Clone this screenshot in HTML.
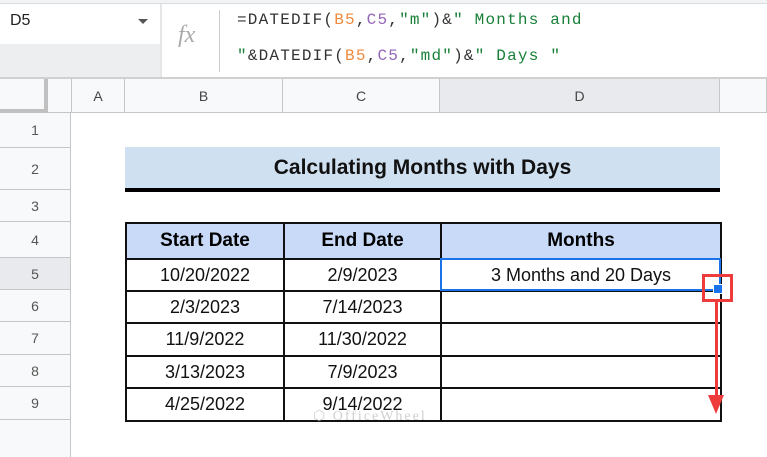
<!DOCTYPE html><html><head><style>
body{margin:0;width:767px;height:457px;overflow:hidden;background:#fff;font-family:"Liberation Sans",Arial,sans-serif;position:relative}
.a{position:absolute;box-sizing:border-box}
.mono{font-family:"Liberation Mono","DejaVu Sans Mono",monospace;font-size:16px;letter-spacing:1.2px;color:#333}
.ch{top:79px;height:34px;background:#f8f9fa;border-right:1px solid #c6c6c6;border-bottom:1px solid #c6c6c6;color:#444;font-size:14px;text-align:center;line-height:34px}
.rh{left:0;width:71px;background:#f8f9fa;border-right:1px solid #c6c6c6;border-bottom:1px solid #c6c6c6;color:#555;font-size:14px;text-align:center}
table{position:absolute;left:125px;top:222px;border-collapse:collapse;font-size:18px;table-layout:fixed}
td{border:2px solid #111;text-align:center;padding:0;color:#111}
th{border:2px solid #111;background:#c9daf8;font-size:19px;padding:0}
</style></head><body>
<div class="a" style="left:0;top:0;width:767px;height:4px;background:#f1f3f4;border-bottom:1px solid #dadce0"></div>
<div class="a" style="left:0;top:4px;width:160px;height:40px;font-size:16px;line-height:34px;padding-left:10px;color:#222">D5</div>
<div class="a" style="left:138px;top:19px;width:0;height:0;border-left:5px solid transparent;border-right:5px solid transparent;border-top:5px solid #555"></div>
<div class="a" style="left:0;top:44px;width:160px;height:34px;background:#eceef0"></div>
<div class="a" style="left:160px;top:4px;width:2px;height:74px;background:#e6e6e6"></div>
<div class="a" style="left:178px;top:22px;font-family:'Liberation Serif',serif;font-style:italic;font-size:24px;color:#aaa">fx</div>
<div class="a" style="left:219px;top:10px;width:1px;height:62px;background:#ccc"></div>
<div class="a mono" style="left:237px;top:11px">=DATEDIF(<span style="color:#f08a3e">B5</span>,<span style="color:#9565b8">C5</span>,<span style="color:#188038">"m"</span>)&amp;<span style="color:#188038">" Months and</span></div>
<div class="a mono" style="left:237px;top:47px"><span style="color:#188038">"</span>&amp;DATEDIF(<span style="color:#f08a3e">B5</span>,<span style="color:#9565b8">C5</span>,<span style="color:#188038">"md"</span>)&amp;<span style="color:#188038">" Days "</span></div>
<div class="a" style="left:0;top:77px;width:767px;height:2px;background:#d0d0d0"></div>
<div class="a ch" style="left:0;width:48px;border-right:4px solid #c0c0c0;border-bottom:4px solid #c0c0c0"></div>
<div class="a ch" style="left:48px;width:23px;border-right:none"></div>
<div class="a ch" style="left:71px;width:54px;border-left:1px solid #c6c6c6">A</div>
<div class="a ch" style="left:125px;width:158px">B</div>
<div class="a ch" style="left:283px;width:157px">C</div>
<div class="a ch" style="left:440px;width:280px;background:#e8eaed">D</div>
<div class="a ch" style="left:720px;width:47px"></div>
<div class="a rh" style="top:113px;height:35px;line-height:35px">1</div>
<div class="a rh" style="top:148px;height:42px;line-height:42px">2</div>
<div class="a rh" style="top:190px;height:32px;line-height:32px">3</div>
<div class="a rh" style="top:222px;height:36px;line-height:36px">4</div>
<div class="a rh" style="top:258px;height:32px;line-height:32px;background:#e8eaed">5</div>
<div class="a rh" style="top:290px;height:32px;line-height:32px">6</div>
<div class="a rh" style="top:322px;height:33px;line-height:33px">7</div>
<div class="a rh" style="top:355px;height:32px;line-height:32px">8</div>
<div class="a rh" style="top:387px;height:33px;line-height:33px">9</div>
<div class="a rh" style="top:420px;height:37px;border-bottom:none"></div>
<div class="a" style="left:125px;top:147px;width:595px;height:45px;background:#cfe0f1;border-bottom:4px solid #000;text-align:center;font-weight:bold;font-size:21px;line-height:42px;color:#111">Calculating Months with Days</div>
<table>
<colgroup><col style="width:158px"><col style="width:157px"><col style="width:280px"></colgroup>
<tr style="height:36px"><th>Start Date</th><th>End Date</th><th>Months</th></tr>
<tr style="height:32px"><td>10/20/2022</td><td>2/9/2023</td><td>3 Months and 20 Days</td></tr>
<tr style="height:32px"><td>2/3/2023</td><td>7/14/2023</td><td></td></tr>
<tr style="height:33px"><td>11/9/2022</td><td>11/30/2022</td><td></td></tr>
<tr style="height:32px"><td>3/13/2023</td><td>7/9/2023</td><td></td></tr>
<tr style="height:33px"><td>4/25/2022</td><td>9/14/2022</td><td></td></tr>
</table>
<div class="a" style="left:440px;top:258px;width:281px;height:33px;border:2px solid #1a73e8"></div>
<div class="a" style="left:702px;top:274px;width:31px;height:28px;border:3px solid #ee3b3b"></div>
<div class="a" style="left:713px;top:284px;width:10px;height:10px;background:#1a73e8;border:1px solid #fff"></div>
<div class="a" style="left:715px;top:302px;width:3px;height:100px;background:#ee3b3b"></div>
<div class="a" style="left:708px;top:395px;width:0;height:0;border-left:8px solid transparent;border-right:8px solid transparent;border-top:19px solid #ee3b3b"></div>
<div class="a" style="left:313px;top:408px;font-family:'Liberation Serif',serif;font-size:14px;letter-spacing:2px;color:#bbb;opacity:.7">⬡ OfficeWheel</div>
</body></html>
